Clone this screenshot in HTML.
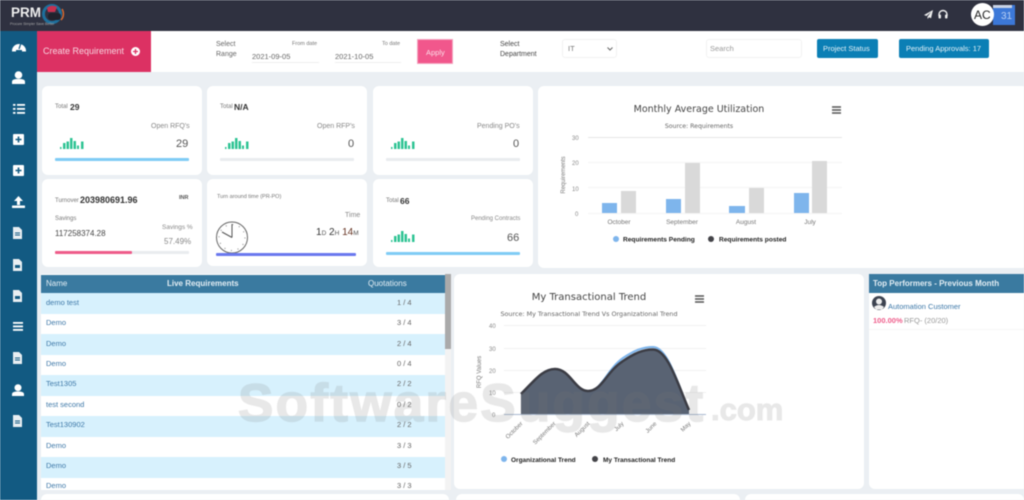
<!DOCTYPE html>
<html><head><meta charset="utf-8"><style>
html,body{margin:0;padding:0;width:1024px;height:500px;overflow:hidden;background:#ebeff3}
#p{position:relative;width:1024px;height:500px;overflow:hidden;font-family:"Liberation Sans",sans-serif;filter:blur(.5px)}
#p div,#p span.a{position:absolute;white-space:nowrap}
.card{background:#fff;border-radius:6px}
.s{font-size:6px;color:#777}
.g{font-size:7px;color:#888}
.n{font-size:11px;color:#555}
.b{font-weight:bold;color:#333}
.bar{height:2.5px;background:#e9ecef;border-radius:1px}
.rl{font-size:7.5px;color:#3d78a8;left:46px}
.rq{font-size:7.5px;color:#666;left:397px}
.row{left:41px;width:404px;height:20.5px}
svg{position:absolute;overflow:visible}
</style></head><body><div id="p">
<div style="left:0;top:0;width:1024px;height:31px;background:#2f3140"></div>
<div style="left:11px;top:5px;font-size:13.5px;font-weight:bold;color:#eee">PRM</div>
<svg style="left:41px;top:3px" width="24" height="22"><circle cx="11" cy="11" r="8.5" fill="none" stroke="#1e6f9c" stroke-width="3"/><path d="M6 5A8 8 0 0 1 16 4L14 9H7Z" fill="#c8314f"/><rect x="7" y="10" width="13" height="7" rx="3" fill="#20222c"/><path d="M21 6A9 9 0 0 1 20 17" fill="none" stroke="#d9682e" stroke-width="1.5"/></svg>
<div style="left:10px;top:22px;font-size:3.5px;color:#aaa">Procure Simpler Save Better</div>
<svg style="left:924px;top:10px" width="9" height="9" viewBox="0 0 9 9"><path d="M9 0L0 5l2.500 1L7 2 3.500 6.800V9L5 7.300 7 8.300Z" fill="#eee"/></svg>
<svg style="left:938px;top:10px" width="10" height="9" viewBox="0 0 10 9"><path d="M1 6V4.500a4 4 0 0 1 8 0V6" fill="none" stroke="#eee" stroke-width="1.400"/><rect x=".5" y="4.500" width="2.500" height="4" rx="1" fill="#eee"/><rect x="7" y="4.500" width="2.500" height="4" rx="1" fill="#eee"/></svg>
<div style="left:993px;top:5px;width:22px;height:20px;background:#3c78d8"></div>
<div style="left:993px;top:5px;width:19px;height:3px;background:#c9d3e6"></div>
<div style="left:1001px;top:11px;font-size:10px;color:#b9d0f5">31</div>
<div style="left:971px;top:3px;width:23px;height:23px;border-radius:50%;background:#fff"></div>
<div style="left:974px;top:8px;font-size:12px;color:#222">AC</div>

<!-- Sidebar -->
<div style="left:0;top:31px;width:37px;height:469px;background:#125a82"></div>
<svg style="left:12px;top:40px" width="14" height="12" viewBox="0 0 14 12"><path d="M0 11A7 7 0 1 1 14 11L14 11.500H10V10H4V11.500H0Z" fill="#fff"/><path d="M7 9L9 3" stroke="#125a82" stroke-width="1.200"/></svg>
<svg style="left:12px;top:71px" width="13" height="13" viewBox="0 0 13 13"><circle cx="6.500" cy="4" r="3.800" fill="#fff"/><path d="M0 13V10.500Q0 8.500 4 8H9Q13 8.500 13 10.500V13Z" fill="#fff"/></svg>
<svg style="left:13px;top:103px" width="12" height="11" viewBox="0 0 12 11" fill="#fff"><rect x="4" y="1" width="8" height="1.800"/><rect x="4" y="5" width="8" height="1.800"/><rect x="4" y="9" width="8" height="1.800"/><rect x="0" y="1" width="2.500" height="1.800"/><rect x="0" y="5" width="2.500" height="1.800"/><rect x="0" y="9" width="2.500" height="1.800"/></svg>
<svg style="left:13px;top:134px" width="11" height="11" viewBox="0 0 11 11"><rect width="11" height="11" rx="1" fill="#fff"/><path d="M5.500 2.500v6M2.500 5.500h6" stroke="#125a82" stroke-width="1.600"/></svg>
<svg style="left:13px;top:165px" width="11" height="11" viewBox="0 0 11 11"><rect width="11" height="11" rx="1" fill="#fff"/><path d="M5.500 2.500v6M2.500 5.500h6" stroke="#125a82" stroke-width="1.600"/></svg>
<svg style="left:12px;top:196px" width="13" height="12" viewBox="0 0 13 12" fill="#fff"><path d="M6.500 0L11 5H8V9H5V5H2Z"/><rect y="9.500" width="13" height="2.500" rx=".5"/></svg>
<svg style="left:13px;top:227px" width="9" height="12" viewBox="0 0 9 12"><path d="M0 0H6L9 3V12H0Z" fill="#e8eef2"/><path d="M2 6h5M2 8h5" stroke="#125a82"/></svg>
<svg style="left:13px;top:259px" width="9" height="12" viewBox="0 0 9 12"><path d="M0 0H6L9 3V12H0Z" fill="#e8eef2"/><rect x="2" y="6" width="5" height="3" fill="#125a82"/></svg>
<svg style="left:13px;top:290px" width="9" height="12" viewBox="0 0 9 12"><path d="M0 0H6L9 3V12H0Z" fill="#e8eef2"/><rect x="2" y="6" width="5" height="3" fill="#125a82"/></svg>
<svg style="left:13px;top:322px" width="10" height="9" viewBox="0 0 10 9" fill="#fff"><rect width="10" height="1.800"/><rect y="3.500" width="10" height="1.800"/><rect y="7" width="10" height="1.800"/></svg>
<svg style="left:13px;top:352px" width="9" height="12" viewBox="0 0 9 12"><path d="M0 0H6L9 3V12H0Z" fill="#e8eef2"/><path d="M2 6h5M2 8h5" stroke="#125a82"/></svg>
<svg style="left:12px;top:384px" width="12" height="12" viewBox="0 0 12 12"><circle cx="6" cy="3.700" r="3.500" fill="#fff"/><path d="M0 12V10Q0 8 4 7.500H8Q12 8 12 10V12Z" fill="#fff"/></svg>
<svg style="left:13px;top:415px" width="9" height="12" viewBox="0 0 9 12"><path d="M0 0H6L9 3V12H0Z" fill="#e8eef2"/><path d="M2 6h5M2 8h5" stroke="#125a82"/></svg>

<!-- Toolbar -->
<div style="left:37px;top:31px;width:987px;height:41px;background:#fff"></div>
<div style="left:37px;top:31px;width:114px;height:41px;background:#dc3163"></div>
<div style="left:43px;top:46px;font-size:9px;color:#f6d5df">Create Requirement</div>
<svg style="left:131px;top:47px" width="9" height="9" viewBox="0 0 9 9"><circle cx="4.500" cy="4.500" r="4.500" fill="#fff"/><path d="M4.500 2v5M2 4.500h5" stroke="#dc3163" stroke-width="1.300"/></svg>
<div style="left:216px;top:40px;font-size:7px;color:#666;line-height:10px;white-space:normal;width:30px">Select<br>Range</div>
<div class="s" style="left:292px;top:41px;font-size:5.500px">From date</div>
<div class="g" style="left:252px;top:52px;font-size:7.500px;color:#666">2021-09-05</div>
<div style="left:252px;top:62px;width:67px;height:1px;background:#eee"></div>
<div class="s" style="left:382px;top:41px;font-size:5.500px">To date</div>
<div class="g" style="left:335px;top:52px;font-size:7.500px;color:#666">2021-10-05</div>
<div style="left:335px;top:62px;width:66px;height:1px;background:#eee"></div>
<div style="left:417px;top:39px;width:36px;height:25px;background:#f1578c;border:1px solid #f3a5bf;box-sizing:border-box"></div>
<div style="left:426px;top:48px;font-size:7.500px;color:#fbdde7">Apply</div>
<div style="left:500px;top:40px;font-size:7px;color:#444;line-height:10px">Select<br>Department</div>
<div style="left:562px;top:39px;width:55px;height:19px;border:1px solid #f2f2f2;border-radius:3px;box-sizing:border-box"></div>
<div style="left:568px;top:44px;font-size:7.500px;color:#777">IT</div>
<svg style="left:607px;top:47px" width="6" height="4"><path d="M.5 .5L3 3 5.500 .5" fill="none" stroke="#666" stroke-width="1"/></svg>
<div style="left:706px;top:39px;width:96px;height:19px;border:1px solid #f2f2f2;border-radius:3px;box-sizing:border-box"></div>
<div style="left:710px;top:44px;font-size:7.500px;color:#999">Search</div>
<div style="left:817px;top:39px;width:61px;height:19px;background:#0b7fb5;border-radius:2px"></div>
<div style="left:823px;top:44px;font-size:7.500px;color:#e5f1f7">Project Status</div>
<div style="left:899px;top:39px;width:90px;height:19px;background:#0b7fb5;border-radius:2px"></div>
<div style="left:906px;top:44px;font-size:7.500px;color:#e5f1f7">Pending Approvals: 17</div>

<!-- Stat cards -->
<div class="card" style="left:42px;top:86px;width:160px;height:89px"></div>
<div class="card" style="left:207px;top:86px;width:160px;height:89px"></div>
<div class="card" style="left:373px;top:86px;width:160px;height:89px"></div>
<div class="card" style="left:42px;top:179px;width:160px;height:88px"></div>
<div class="card" style="left:207px;top:179px;width:160px;height:87px"></div>
<div class="card" style="left:373px;top:179px;width:160px;height:88px"></div>

<div class="s" style="left:55px;top:104px">Total</div><div class="b" style="left:70px;top:102px;font-size:8.500px">29</div>
<div class="g" style="left:151px;top:123px">Open RFQ's</div>
<svg style="left:60px;top:137px" width="26" height="13" fill="#2fc494"><rect x="0" y="10" width="1.500" height="2"/><rect x="3" y="6" width="2.500" height="6"/><rect x="6.500" y="4.500" width="2.500" height="7.500"/><rect x="10" y="1" width="2.500" height="11"/><rect x="13.500" y="4" width="2.500" height="8"/><rect x="17" y="8.500" width="2" height="3.500"/><rect x="21" y="4.500" width="2.500" height="7.500"/></svg>
<div class="n" style="left:176px;top:138px">29</div>
<div class="bar" style="left:55px;top:158px;width:134px;background:#7fccf5"></div>

<div class="s" style="left:220px;top:104px">Total</div><div class="b" style="left:234px;top:102px;font-size:8.500px">N/A</div>
<div class="g" style="left:317px;top:123px">Open RFP's</div>
<svg style="left:225px;top:137px" width="26" height="13" fill="#2fc494"><rect x="0" y="10" width="1.500" height="2"/><rect x="3" y="6" width="2.500" height="6"/><rect x="6.500" y="4.500" width="2.500" height="7.500"/><rect x="10" y="1" width="2.500" height="11"/><rect x="13.500" y="4" width="2.500" height="8"/><rect x="17" y="8.500" width="2" height="3.500"/><rect x="21" y="4.500" width="2.500" height="7.500"/></svg>
<div class="n" style="left:348px;top:138px">0</div>
<div class="bar" style="left:220px;top:158px;width:134px"></div>

<div class="g" style="left:477px;top:123px">Pending PO's</div>
<svg style="left:391px;top:137px" width="26" height="13" fill="#2fc494"><rect x="0" y="10" width="1.500" height="2"/><rect x="3" y="6" width="2.500" height="6"/><rect x="6.500" y="4.500" width="2.500" height="7.500"/><rect x="10" y="1" width="2.500" height="11"/><rect x="13.500" y="4" width="2.500" height="8"/><rect x="17" y="8.500" width="2" height="3.500"/><rect x="21" y="4.500" width="2.500" height="7.500"/></svg>
<div class="n" style="left:513px;top:138px">0</div>
<div class="bar" style="left:386px;top:158px;width:134px"></div>

<div class="s" style="left:55px;top:198px">Turnover</div><div class="b" style="left:80px;top:195px;font-size:9px">203980691.96</div>
<div style="left:179px;top:195px;font-size:5.500px;color:#555;font-weight:bold">INR</div>
<div class="s" style="left:55px;top:216px">Savings</div>
<div style="left:55px;top:229px;font-size:8px;color:#444">117258374.28</div>
<div class="g" style="left:162px;top:224px;font-size:6.500px">Savings %</div>
<div class="g" style="left:164px;top:237px;font-size:8px">57.49%</div>
<div class="bar" style="left:55px;top:251px;width:134px"></div>
<div class="bar" style="left:55px;top:251px;width:77px;background:#ee5c8a"></div>

<div class="s" style="left:217px;top:194px;font-size:5.500px">Turn around time (PR-PO)</div>
<div class="g" style="left:345px;top:212px">Time</div>
<div style="left:316px;top:227px;font-size:10px;color:#555"><b style="font-weight:normal;color:#333">1</b><span style="font-size:6.500px">D</span> <b style="font-weight:normal;color:#333">2</b><span style="font-size:6.500px">H</span> <b style="font-weight:normal;color:#632">14</b><span style="font-size:6.500px">M</span></div>
<svg style="left:216px;top:221px" width="33" height="33" viewBox="0 0 33 33"><circle cx="16" cy="16.500" r="15.500" fill="#fff" stroke="#666" stroke-width="1"/><circle cx="16" cy="16.500" r="13" fill="none" stroke="#999" stroke-width="1.200" stroke-dasharray="1 5.800"/><path d="M16 16.500V3M16 16.500L6 11" stroke="#555" stroke-width="1"/></svg>
<div class="bar" style="left:216px;top:253px;width:140px;background:#6a78ee;height:3px"></div>

<div class="s" style="left:386px;top:198px">Total</div><div class="b" style="left:400px;top:196px;font-size:8.500px">66</div>
<div class="g" style="left:471px;top:216px;font-size:6px">Pending Contracts</div>
<svg style="left:391px;top:230px" width="26" height="13" fill="#2fc494"><rect x="0" y="10" width="1.500" height="2"/><rect x="3" y="6" width="2.500" height="6"/><rect x="6.500" y="4.500" width="2.500" height="7.500"/><rect x="10" y="1" width="2.500" height="11"/><rect x="13.500" y="4" width="2.500" height="8"/><rect x="17" y="8.500" width="2" height="3.500"/><rect x="21" y="4.500" width="2.500" height="7.500"/></svg>
<div class="n" style="left:507px;top:232px">66</div>
<div class="bar" style="left:386px;top:252px;width:134px;background:#7fccf5"></div>

<!-- Chart 1 -->
<div class="card" style="left:538px;top:86px;width:490px;height:182px"></div>
<svg style="left:538px;top:86px" width="486" height="182" viewBox="538 86 486 182" font-family="Liberation Sans, sans-serif">
<text x="699" y="112" text-anchor="middle" font-size="9.500" fill="#444" font-family="DejaVu Sans, sans-serif">Monthly Average Utilization</text>
<text x="699" y="128" text-anchor="middle" font-size="6.200" fill="#666" font-family="DejaVu Sans, sans-serif">Source: Requirements</text>
<path d="M832 107h9M832 110h9M832 113h9" stroke="#555" stroke-width="1.500"/>
<path d="M588 137.500H842" stroke="#e6e6e6"/><path d="M588 162.500H842M588 187.500H842M588 213.500H842" stroke="#f4f4f4"/>
<g font-size="6" fill="#888"><text x="572" y="140">30</text><text x="572" y="165">20</text><text x="572" y="191">10</text><text x="575" y="216">0</text></g>
<text transform="translate(565 175) rotate(-90)" text-anchor="middle" font-size="6" fill="#777">Requirements</text>
<g fill="#7eb5ec"><rect x="602" y="203" width="15" height="10"/><rect x="666" y="199" width="15" height="14"/><rect x="729" y="206" width="16" height="7"/><rect x="794" y="193" width="15" height="20"/></g>
<g fill="#d9d9d9"><rect x="621" y="191" width="15" height="22"/><rect x="685" y="163" width="15" height="50"/><rect x="749" y="188" width="15" height="25"/><rect x="812" y="161" width="15" height="52"/></g>
<g font-size="6.500" fill="#777" text-anchor="middle"><text x="619" y="224">October</text><text x="682" y="224">September</text><text x="746" y="224">August</text><text x="810" y="224">July</text></g>
<circle cx="616" cy="239" r="3" fill="#7eb5ec"/><text x="623" y="241.500" font-size="6.600" font-weight="bold" fill="#222">Requirements Pending</text>
<circle cx="711" cy="239" r="3" fill="#434348"/><text x="719" y="241.500" font-size="6.600" font-weight="bold" fill="#222">Requirements posted</text>
</svg>

<!-- Table -->
<div style="left:41px;top:274px;width:410px;height:216px;background:#fff;overflow:hidden"></div>
<div style="left:41px;top:275px;width:404px;height:17.500px;background:#3a7aa0"></div>
<div style="left:46px;top:279px;font-size:8px;color:#e4eef4">Name</div>
<div style="left:167px;top:279px;font-size:8px;font-weight:bold;color:#e4eef4">Live Requirements</div>
<div style="left:368px;top:279px;font-size:8px;color:#e4eef4">Quotations</div>
<div class="row" style="top:293px;background:#d7f1fd"></div>
<div class="row" style="top:334px;background:#d7f1fd"></div>
<div class="row" style="top:375px;background:#d7f1fd"></div>
<div class="row" style="top:416px;background:#d7f1fd"></div>
<div class="row" style="top:457px;background:#d7f1fd"></div>
<div class="rl" style="top:298px">demo test</div><div class="rq" style="top:298px">1 / 4</div>
<div class="rl" style="top:318px">Demo</div><div class="rq" style="top:318px">3 / 4</div>
<div class="rl" style="top:339px">Demo</div><div class="rq" style="top:339px">2 / 4</div>
<div class="rl" style="top:359px">Demo</div><div class="rq" style="top:359px">0 / 4</div>
<div class="rl" style="top:379px">Test1305</div><div class="rq" style="top:379px">2 / 2</div>
<div class="rl" style="top:400px">test second</div><div class="rq" style="top:400px">0 / 2</div>
<div class="rl" style="top:420px">Test130902</div><div class="rq" style="top:420px">2 / 2</div>
<div class="rl" style="top:441px">Demo</div><div class="rq" style="top:441px">3 / 3</div>
<div class="rl" style="top:461px">Demo</div><div class="rq" style="top:461px">3 / 5</div>
<div class="rl" style="top:481px">Demo</div><div class="rq" style="top:481px">3 / 3</div>
<div style="left:445px;top:274px;width:6px;height:75px;background:#aaa"></div>
<div style="left:445px;top:349px;width:6px;height:141px;background:#f3f3f3"></div>

<!-- Chart 2 -->
<div class="card" style="left:454px;top:274px;width:410px;height:215px"></div>
<svg style="left:454px;top:274px" width="410" height="215" viewBox="454 274 410 215" font-family="Liberation Sans, sans-serif">
<text x="589" y="300" text-anchor="middle" font-size="10" fill="#444" font-family="DejaVu Sans, sans-serif">My Transactional Trend</text>
<text x="589" y="316" text-anchor="middle" font-size="6.400" fill="#666" font-family="DejaVu Sans, sans-serif">Source: My Transactional Trend Vs Organizational Trend</text>
<path d="M695 296h9M695 299h9M695 302h9" stroke="#555" stroke-width="1.500"/>
<path d="M504 325.500H706M504 348.500H706M504 370.500H706M504 392.500H706" stroke="#f1f1f1"/><path d="M504 414.500H706" stroke="#a9b9d0"/>
<g font-size="6" fill="#888"><text x="489" y="328">40</text><text x="489" y="351">30</text><text x="489" y="373">20</text><text x="489" y="395">10</text><text x="492" y="417">0</text></g>
<text transform="translate(481 372) rotate(-90)" text-anchor="middle" font-size="6" fill="#777">RFQ Values</text>
<path d="M521 394C535 380 543 369 555 369C570 369 575 391 588 391C602 391 606 370 623 358C635 350 643 347 653 347C668 347 678 385 689 410" fill="none" stroke="#7eb5ec" stroke-width="2"/>
<path d="M521 394C535 380 543 369 555 369C570 369 575 391 588 391C602 391 606 372 623 361C635 353 643 349.500 653 349.500C668 349.500 678 385 689 410V414H521Z" fill="#596373"/>
<path d="M521 394C535 380 543 369 555 369C570 369 575 391 588 391C602 391 606 372 623 361C635 353 643 349.500 653 349.500C668 349.500 678 385 689 410" fill="none" stroke="#3b3c44" stroke-width="2.500"/>
<g font-size="6" fill="#777" text-anchor="end"><text transform="translate(523 424) rotate(-45)">October</text><text transform="translate(556 424) rotate(-45)">September</text><text transform="translate(590 424) rotate(-45)">August</text><text transform="translate(624 424) rotate(-45)">July</text><text transform="translate(657 424) rotate(-45)">June</text><text transform="translate(691 424) rotate(-45)">May</text></g>
<circle cx="504" cy="459" r="3" fill="#7eb5ec"/><text x="511" y="462" font-size="6.500" font-weight="bold" fill="#222">Organizational Trend</text>
<circle cx="595" cy="459" r="3" fill="#434348"/><text x="603" y="462" font-size="6.500" font-weight="bold" fill="#222">My Transactional Trend</text>
</svg>

<!-- Right panel -->
<div class="card" style="left:869px;top:274px;width:160px;height:215px"></div>
<div style="left:869px;top:274px;width:155px;height:18.500px;background:#3a7aa0"></div>
<div style="left:873px;top:279px;font-size:8px;font-weight:bold;color:#e4eef4">Top Performers - Previous Month</div>
<svg style="left:872px;top:296px" width="14" height="14" viewBox="0 0 14 14"><circle cx="7" cy="7" r="7" fill="#3d4350"/><circle cx="7" cy="5.500" r="3" fill="#eee"/><path d="M2 11Q7 7 12 11L10 13.500H4Z" fill="#eee"/></svg>
<div style="left:888px;top:302px;font-size:7.500px;color:#3d78a8">Automation Customer</div>
<div style="left:873px;top:316px;font-size:7.500px;color:#ee5c8a;font-weight:bold">100.00%</div>
<div style="left:904px;top:316px;font-size:7.500px;color:#999">RFQ- (20/20)</div>
<div style="left:869px;top:329px;width:155px;height:1px;background:#f7f7f7"></div>

<!-- Bottom cards -->
<div class="card" style="left:41px;top:494px;width:408px;height:20px"></div>
<div class="card" style="left:456px;top:494px;width:284px;height:20px"></div>
<div class="card" style="left:745px;top:494px;width:279px;height:20px"></div>

<!-- Watermark: opacity applied to whole element so fill and stroke do not double up -->
<div style="left:238px;top:373px;font-size:53px;font-weight:bold;color:#787878;-webkit-text-stroke:1.500px #787878;letter-spacing:2.300px;opacity:.16">SoftwareSuggest</div>
<div style="left:711px;top:392px;font-size:31px;font-weight:bold;color:#787878;-webkit-text-stroke:1px #787878;opacity:.16">.com</div>
</div></body></html>
